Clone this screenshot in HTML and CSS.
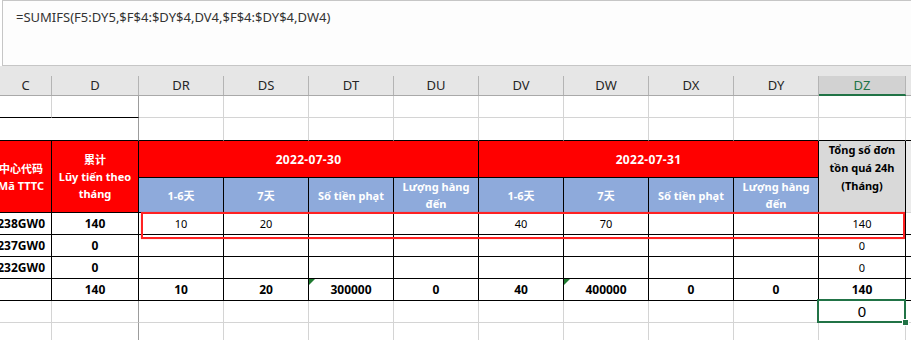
FILE: index.html
```html
<!DOCTYPE html>
<html lang="vi">
<head>
    <meta charset="UTF-8">
    <meta name="viewport" content="width=device-width, initial-scale=1.0">
    <title>SUMIFS</title>
    <link rel="stylesheet" href="styles.css">
</head>
<body>

<div class="formula-bar">
    <span class="formula">=SUMIFS(F5:DY5,$F$4:$DY$4,DV4,$F$4:$DY$4,DW4)</span>
</div>

<div class="sheet">
    <!-- tiêu đề cột -->
    <div class="col-head"><span>C</span></div>
    <div class="col-head"><span>D</span></div>
    <div class="col-head"><span>DR</span></div>
    <div class="col-head"><span>DS</span></div>
    <div class="col-head"><span>DT</span></div>
    <div class="col-head"><span>DU</span></div>
    <div class="col-head"><span>DV</span></div>
    <div class="col-head"><span>DW</span></div>
    <div class="col-head"><span>DX</span></div>
    <div class="col-head"><span>DY</span></div>
    <div class="col-head active"><span>DZ</span></div>
    <div class="col-head last"><span></span></div>

    <!-- dòng trống trên bảng -->
    <div class="cell bb"></div>
    <div class="cell bb freeze"></div>
    <div class="cell"></div>
    <div class="cell"></div>
    <div class="cell"></div>
    <div class="cell"></div>
    <div class="cell"></div>
    <div class="cell"></div>
    <div class="cell"></div>
    <div class="cell"></div>
    <div class="cell"></div>
    <div class="cell edge"></div>

    <div class="cell span2 bb freeze"></div>
    <div class="cell bb"></div>
    <div class="cell bb"></div>
    <div class="cell bb"></div>
    <div class="cell bb"></div>
    <div class="cell bb"></div>
    <div class="cell bb"></div>
    <div class="cell bb"></div>
    <div class="cell bb"></div>
    <div class="cell bb"></div>
    <div class="cell bb edge"></div>

    <!-- tiêu đề bảng -->
    <div class="cell tb red rows2 clip"><div class="lines">中心代码<br>Mã TTTC</div></div>
    <div class="cell tb red rows2"><div class="lines">累计<br>Lũy tiến theo<br>tháng</div></div>
    <div class="cell tb red span4 date">2022-07-30</div>
    <div class="cell tb red span4 date">2022-07-31</div>
    <div class="cell tb gray rows2 top"><div class="lines tall">Tổng số đơn<br>tồn quá 24h<br>(Tháng)</div></div>
    <div class="cell side rows2 edge"></div>

    <div class="cell tb blue">1-6天</div>
    <div class="cell tb blue">7天</div>
    <div class="cell tb blue">Số tiền phạt</div>
    <div class="cell tb blue"><div class="lines">Lượng hàng<br>đến</div></div>
    <div class="cell tb blue">1-6天</div>
    <div class="cell tb blue">7天</div>
    <div class="cell tb blue">Số tiền phạt</div>
    <div class="cell tb blue"><div class="lines">Lượng hàng<br>đến</div></div>

    <!-- dữ liệu -->
    <div class="cell tb bold code">238GW0</div>
    <div class="cell tb bold">140</div>
    <div class="cell tb">10</div>
    <div class="cell tb">20</div>
    <div class="cell tb"></div>
    <div class="cell tb"></div>
    <div class="cell tb">40</div>
    <div class="cell tb">70</div>
    <div class="cell tb"></div>
    <div class="cell tb"></div>
    <div class="cell tb">140</div>
    <div class="cell bb edge"></div>

    <div class="cell tb bold code">237GW0</div>
    <div class="cell tb bold">0</div>
    <div class="cell tb"></div>
    <div class="cell tb"></div>
    <div class="cell tb"></div>
    <div class="cell tb"></div>
    <div class="cell tb"></div>
    <div class="cell tb"></div>
    <div class="cell tb"></div>
    <div class="cell tb"></div>
    <div class="cell tb">0</div>
    <div class="cell bb edge"></div>

    <div class="cell tb bold code">232GW0</div>
    <div class="cell tb bold">0</div>
    <div class="cell tb"></div>
    <div class="cell tb"></div>
    <div class="cell tb"></div>
    <div class="cell tb"></div>
    <div class="cell tb"></div>
    <div class="cell tb"></div>
    <div class="cell tb"></div>
    <div class="cell tb"></div>
    <div class="cell tb">0</div>
    <div class="cell bb edge"></div>

    <!-- tổng -->
    <div class="cell tb bold"></div>
    <div class="cell tb bold">140</div>
    <div class="cell tb bold">10</div>
    <div class="cell tb bold">20</div>
    <div class="cell tb bold flag">300000</div>
    <div class="cell tb bold">0</div>
    <div class="cell tb bold">40</div>
    <div class="cell tb bold flag">400000</div>
    <div class="cell tb bold">0</div>
    <div class="cell tb bold">0</div>
    <div class="cell tb bold">140</div>
    <div class="cell bb edge"></div>

    <!-- dòng trống -->
    <div class="cell"></div>
    <div class="cell freeze"></div>
    <div class="cell"></div>
    <div class="cell"></div>
    <div class="cell"></div>
    <div class="cell"></div>
    <div class="cell"></div>
    <div class="cell"></div>
    <div class="cell"></div>
    <div class="cell"></div>
    <div class="cell selected">0</div>
    <div class="cell edge"></div>

    <div class="cell"></div>
    <div class="cell freeze"></div>
    <div class="cell"></div>
    <div class="cell"></div>
    <div class="cell"></div>
    <div class="cell"></div>
    <div class="cell"></div>
    <div class="cell"></div>
    <div class="cell"></div>
    <div class="cell"></div>
    <div class="cell"></div>
    <div class="cell edge"></div>

    <div class="mark"></div>
</div>

</body>
</html>
```

FILE: styles.css
```css
body {
    margin: 0;
    overflow: hidden;
    background-color: #fff;
    font-family: "Noto Sans", "Noto Sans CJK SC", sans-serif;
}

/* Thanh công thức */
.formula-bar {
    height: 66px;
    box-sizing: border-box;
    margin-left: 2px;
    padding: 4px 13px;
    border: 1px solid #c6c6c6;
    border-right: none;
    background-color: #fdfdfd;
}

.formula {
    font-size: 13px;
    line-height: 18px;
    color: #333;
}

.sheet {
    position: relative;
    display: grid;
    grid-template-columns: 52px 87px repeat(8, 85px) 87px 1fr;
    grid-template-rows: 30px 22px 23px 37px 35px repeat(6, 22px);
}

/* Tiêu đề cột A, B, C... */
.col-head {
    display: flex;
    align-items: flex-end;
    background-color: #e6e6e6;
    border-bottom: 1px solid #a9a9a9;
}

.col-head span {
    flex: 1;
    height: 19px;
    line-height: 19px;
    text-align: center;
    font-size: 13px;
    color: #262626;
    border-right: 1px solid #b4b4b4;
}

.col-head.active {
    border-bottom-color: #217346;
}

.col-head.active span {
    background-color: #d2d2d2;
    color: #217346;
    border-bottom: 1px solid #217346;
    height: 18px;
}

.col-head.last span {
    border-right: none;
}

/* Ô */
.cell {
    display: flex;
    align-items: center;
    justify-content: center;
    min-width: 0;
    overflow: hidden;
    white-space: nowrap;
    font-size: 11px;
    color: #000;
    border-right: 1px solid #d4d4d4;
    border-bottom: 1px solid #d4d4d4;
}

.cell.freeze {
    border-right-color: #9c9c9c;
}

.cell.bb {
    border-bottom-color: #000;
}

.cell.tb {
    border-right-color: #000;
    border-bottom-color: #000;
}

.cell.edge {
    border-right: none;
}

.span2 {
    grid-column: span 2;
}

.span4 {
    grid-column: span 4;
}

.rows2 {
    grid-row: span 2;
}

.red {
    background-color: #ff0000;
    color: #fff;
    font-weight: bold;
}

.blue {
    background-color: #8eaadb;
    color: #fff;
    font-weight: bold;
}

.gray {
    background-color: #d9d9d9;
    font-weight: bold;
}

.side {
    background-color: #ebebeb;
}

.date {
    font-size: 12px;
    letter-spacing: 0.3px;
}

.lines {
    text-align: center;
    line-height: 17px;
}

.lines.tall {
    line-height: 18px;
}

.cell.top {
    align-items: flex-start;
}

.cell.clip,
.cell.code {
    justify-content: flex-end;
    padding-right: 7px;
}

.cell.code {
    padding-right: 6px;
}

.bold {
    font-weight: bold;
    font-size: 12px;
}

/* tam giác xanh góc ô */
.flag {
    position: relative;
}

.flag::before {
    content: "";
    position: absolute;
    top: 0;
    left: 0;
    border-top: 6px solid #1f7a30;
    border-right: 6px solid transparent;
}

/* ô đang chọn */
.selected {
    position: relative;
    overflow: visible;
    font-family: "Liberation Sans", sans-serif;
    font-size: 15px;
}

.selected::after {
    content: "";
    position: absolute;
    top: -2px;
    left: -2px;
    right: -1px;
    bottom: -1px;
    border: 2px solid #217346;
}

.selected::before {
    content: "";
    position: absolute;
    right: -4px;
    bottom: -4px;
    width: 5px;
    height: 5px;
    background-color: #217346;
    border: 1px solid #fff;
    z-index: 1;
}

/* khung đỏ đánh dấu */
.mark {
    position: absolute;
    left: 141px;
    top: 146px;
    width: 764px;
    height: 27px;
    box-sizing: border-box;
    border: 2px solid #f22;
    box-shadow: 0 0 1px rgba(255, 0, 0, 0.4);
}
```
